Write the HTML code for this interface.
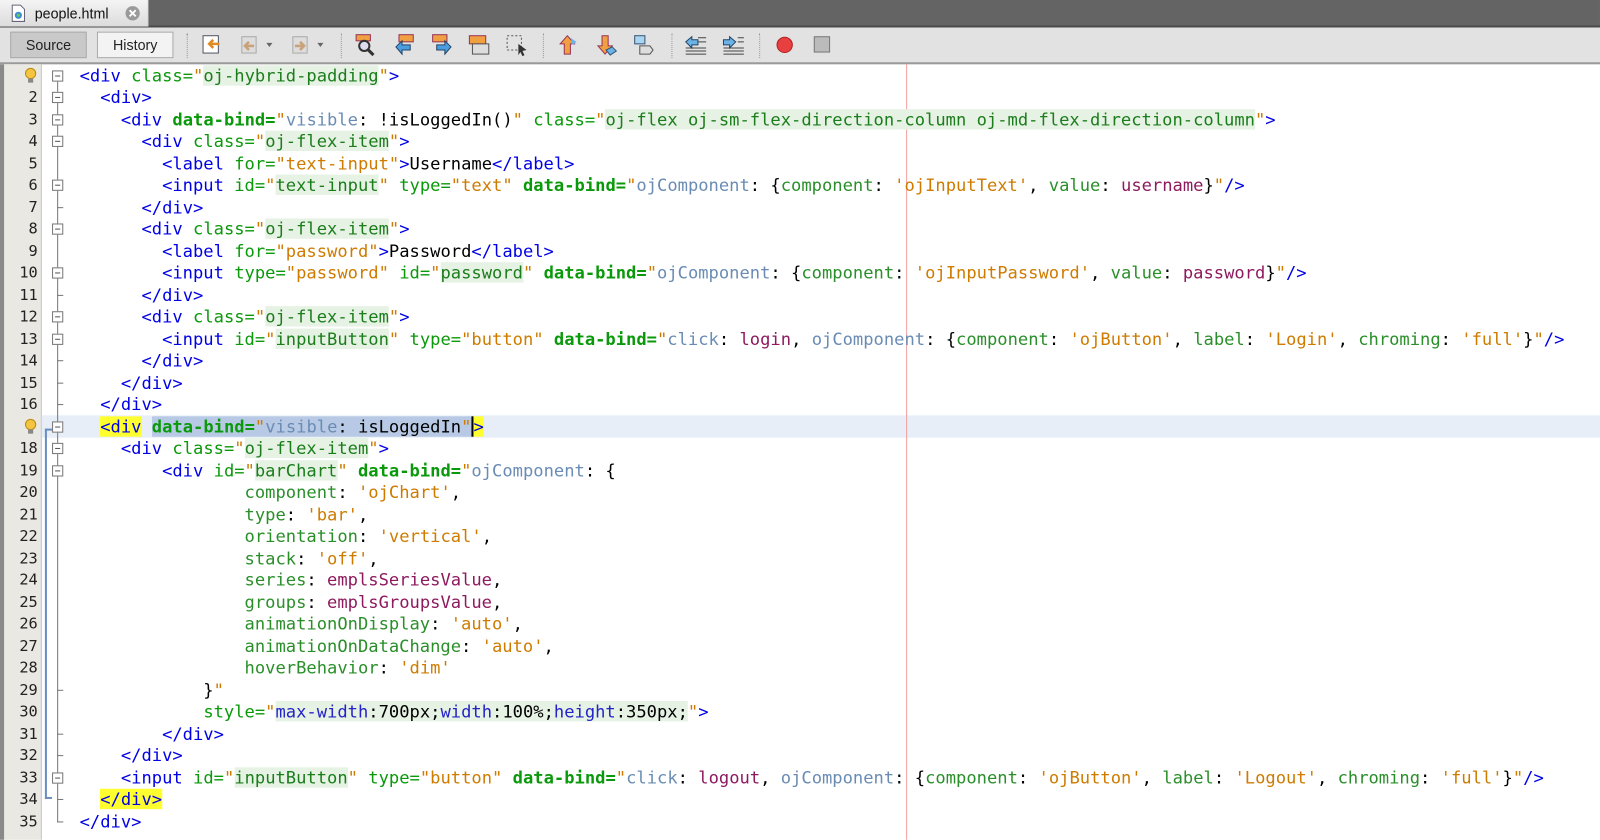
<!DOCTYPE html>
<html><head><meta charset="utf-8"><style>
*{margin:0;padding:0;box-sizing:border-box}
body{width:1600px;height:836px;overflow:hidden;background:#fff;position:relative;font-family:"Liberation Sans",sans-serif}
#wrap{position:absolute;left:0;top:0;width:1568px;height:820px;transform:scale(1.0204);transform-origin:0 0}
#tabbar{position:absolute;left:0;top:0;width:1568px;height:27px;background:#646464;border-bottom:2px solid #4a4a4a}
#tab{position:absolute;left:0;top:0;width:146px;height:26px;background:linear-gradient(#f4f4f4,#dcdcdc);border-right:1px solid #999}
#tab span{position:absolute;left:34px;top:5px;font-size:14px;color:#111}
#toolbar{position:absolute;left:0;top:27px;width:1568px;height:36px;background:#e2e2e2;border-bottom:2px solid #9a9a9a}
.btn{position:absolute;top:4px;height:26px;border:1px solid #aaa;font-size:14px;text-align:center;line-height:24px;color:#222}
.sep{position:absolute;top:6px;height:24px;border-left:1px dotted #999}
.ic{position:absolute;top:6px}
#gutter{position:absolute;left:0;top:63px;width:41px;height:760px;background:#e9e8e2;border-left:4px solid #8a8a8a;border-right:1px solid #c8c8c8}
.ln{position:absolute;left:0;width:37px;text-align:right;font-family:"DejaVu Sans Mono",monospace;font-size:15px;color:#222;line-height:21.5px}
.code{position:absolute;left:78px;font-family:"DejaVu Sans Mono",monospace;font-size:16.8px;line-height:21.5px;white-space:pre;color:#000}
.fb{position:absolute;left:51px;width:11px;height:11px;border:1px solid #777;background:#fff}
.fb:after{content:"";position:absolute;left:2px;top:4px;width:5px;height:1px;background:#555}
.tk{position:absolute;left:56px;width:6px;height:1px;background:#777}
.t{color:#0000e6}.a{color:#0a990a}.b{color:#0a990a;font-weight:bold}.q{color:#ce7b00}
.v{color:#1b7d1b;background:#e6f2e4}.j{color:#6a8cb4}.k{color:#2a8f2a}.p{color:#8e1a5e}.c{color:#2323c8}
.y{background:#ffff30}.s{background:#b7c9e4}
</style></head><body><div id="wrap">
<div id="tabbar"><div id="tab">
<svg style="position:absolute;left:10px;top:4px" width="16" height="18"><path d="M2 1h8l4 4v12H2z" fill="#fff" stroke="#667"/><circle cx="8" cy="11" r="3.5" fill="#3a8fd0"/><circle cx="8" cy="11" r="1.5" fill="#7c4"/></svg>
<span>people.html</span>
<svg style="position:absolute;left:122px;top:5px" width="16" height="16"><circle cx="8" cy="8" r="7" fill="#9a9a9a"/><path d="M5 5l6 6M11 5l-6 6" stroke="#fff" stroke-width="1.8"/></svg>
</div></div>
<div id="toolbar">
<div class="btn" style="left:10px;width:75px;background:#c9c9c9">Source</div>
<div class="btn" style="left:95px;width:75px;background:#f3f3f3">History</div>
<div class="sep" style="left:183px"></div>
<svg class="ic" style="left:197px" width="22" height="22"><rect x="2" y="2" width="15" height="17" fill="#fff" stroke="#556"/><path d="M8 10h10M12 6l-4 4 4 4" stroke="#e08a20" stroke-width="2.5" fill="none"/></svg>
<svg class="ic" style="left:235px" width="34" height="22"><rect x="2" y="3" width="14" height="16" fill="#ddd" stroke="#aaa"/><path d="M6 12h8M9 8l-4 4 4 4" stroke="#c9a27a" stroke-width="2.5" fill="none"/><path d="M26 9h6l-3 4z" fill="#666"/></svg>
<svg class="ic" style="left:285px" width="34" height="22"><rect x="2" y="3" width="14" height="16" fill="#ddd" stroke="#aaa"/><path d="M4 12h8M9 8l4 4-4 4" stroke="#c9a27a" stroke-width="2.5" fill="none"/><path d="M26 9h6l-3 4z" fill="#666"/></svg>
<div class="sep" style="left:334px"></div>
<svg class="ic" style="left:347px" width="24" height="24"><rect x="2" y="1" width="14" height="6" fill="#f0a040" stroke="#935"/><circle cx="10" cy="12" r="5" fill="#dde" stroke="#333" stroke-width="2"/><path d="M14 16l5 5" stroke="#333" stroke-width="3"/></svg>
<svg class="ic" style="left:385px" width="24" height="24"><rect x="6" y="1" width="14" height="7" fill="#f0a040" stroke="#935"/><path d="M3 13l6-6v4h8v5H9v4z" fill="#4a9ee0" stroke="#246"/></svg>
<svg class="ic" style="left:421px" width="24" height="24"><rect x="3" y="1" width="14" height="7" fill="#f0a040" stroke="#935"/><path d="M21 13l-6-6v4H7v5h8v4z" fill="#4a9ee0" stroke="#246"/></svg>
<svg class="ic" style="left:458px" width="24" height="24"><rect x="2" y="2" width="16" height="8" fill="#f0a040" stroke="#935"/><rect x="5" y="10" width="16" height="10" fill="#ddd" stroke="#555"/></svg>
<svg class="ic" style="left:495px" width="24" height="24"><rect x="2" y="2" width="14" height="14" fill="none" stroke="#555" stroke-dasharray="2 2"/><path d="M13 10l8 6-4 1 2 4-2 1-2-4-2 3z" fill="#333"/></svg>
<div class="sep" style="left:532px"></div>
<svg class="ic" style="left:545px" width="24" height="24"><path d="M11 2l7 8h-4v10H8V10H4z" fill="#f0a040" stroke="#935"/><path d="M14 4l6 4-4 3z" fill="#6bb3e6"/></svg>
<svg class="ic" style="left:582px" width="24" height="24"><path d="M11 20l7-8h-4V2H8v10H4z" fill="#f0a040" stroke="#935"/><path d="M12 16l6-3 4 4-6 4z" fill="#6bb3e6" stroke="#357"/></svg>
<svg class="ic" style="left:619px" width="24" height="24"><rect x="3" y="2" width="10" height="8" fill="#aad4f0" stroke="#357"/><path d="M8 12h10l3 4-3 4H8z" fill="#ddd" stroke="#555"/></svg>
<div class="sep" style="left:658px"></div>
<svg class="ic" style="left:670px" width="24" height="24"><path d="M2 8l6-5v3h6v5H8v3z" fill="#6bb3e6" stroke="#246"/><path d="M14 4h8M14 8h8M2 14h20M2 17h20M2 20h20" stroke="#444"/></svg>
<svg class="ic" style="left:707px" width="24" height="24"><path d="M14 8l-6-5v3H2v5h6v3z" fill="#6bb3e6" stroke="#246"/><path d="M16 4h6M16 8h6M2 14h20M2 17h20M2 20h20" stroke="#444"/></svg>
<div class="sep" style="left:744px"></div>
<svg class="ic" style="left:758px" width="22" height="22"><circle cx="11" cy="11" r="7.5" fill="#e84040" stroke="#b02020"/></svg>
<svg class="ic" style="left:795px" width="22" height="22"><rect x="3" y="3" width="15" height="15" fill="#bbb" stroke="#777"/></svg>
</div>
<div id="gutter"></div>
<div style="position:absolute;left:41px;top:407px;width:1527px;height:22px;background:#e8eef8"></div>
<div style="position:absolute;left:888px;top:63px;width:1px;height:760px;background:#f4a0a0"></div>
<div style="position:absolute;left:56px;top:74px;width:1px;height:732px;background:#777"></div>
<div style="position:absolute;left:44px;top:420px;width:2px;height:363px;background:#6a8fc0"></div>
<div style="position:absolute;left:44px;top:420px;width:7px;height:2px;background:#6a8fc0"></div>
<div style="position:absolute;left:44px;top:781px;width:7px;height:2px;background:#6a8fc0"></div>
<div id="nums"></div>
<svg style="position:absolute;left:23px;top:66px" width="14" height="18"><circle cx="7" cy="6" r="5" fill="#f5c542" stroke="#b88a10"/><rect x="4.5" y="11" width="5" height="4" fill="#888"/></svg>
<svg style="position:absolute;left:23px;top:410px" width="14" height="18"><circle cx="7" cy="6" r="5" fill="#f5c542" stroke="#b88a10"/><rect x="4.5" y="11" width="5" height="4" fill="#888"/></svg>
</div>
<script>
(function(){
var L=[
'<span class=t>&lt;div</span> <span class=a>class=</span><span class=q>"</span><span class=v>oj-hybrid-padding</span><span class=q>"</span><span class=t>&gt;</span>',
'  <span class=t>&lt;div&gt;</span>',
'    <span class=t>&lt;div</span> <span class=b>data-bind=</span><span class=q>"</span><span class=j>visible</span>: !isLoggedIn()<span class=q>"</span> <span class=a>class=</span><span class=q>"</span><span class=v>oj-flex oj-sm-flex-direction-column oj-md-flex-direction-column</span><span class=q>"</span><span class=t>&gt;</span>',
'      <span class=t>&lt;div</span> <span class=a>class=</span><span class=q>"</span><span class=v>oj-flex-item</span><span class=q>"</span><span class=t>&gt;</span>',
'        <span class=t>&lt;label</span> <span class=a>for=</span><span class=q>"text-input"</span><span class=t>&gt;</span>Username<span class=t>&lt;/label&gt;</span>',
'        <span class=t>&lt;input</span> <span class=a>id=</span><span class=q>"</span><span class=v>text-input</span><span class=q>"</span> <span class=a>type=</span><span class=q>"text"</span> <span class=b>data-bind=</span><span class=q>"</span><span class=j>ojComponent</span>: {<span class=k>component</span>: <span class=q>\'ojInputText\'</span>, <span class=k>value</span>: <span class=p>username</span>}<span class=q>"</span><span class=t>/&gt;</span>',
'      <span class=t>&lt;/div&gt;</span>',
'      <span class=t>&lt;div</span> <span class=a>class=</span><span class=q>"</span><span class=v>oj-flex-item</span><span class=q>"</span><span class=t>&gt;</span>',
'        <span class=t>&lt;label</span> <span class=a>for=</span><span class=q>"password"</span><span class=t>&gt;</span>Password<span class=t>&lt;/label&gt;</span>',
'        <span class=t>&lt;input</span> <span class=a>type=</span><span class=q>"password"</span> <span class=a>id=</span><span class=q>"</span><span class=v>password</span><span class=q>"</span> <span class=b>data-bind=</span><span class=q>"</span><span class=j>ojComponent</span>: {<span class=k>component</span>: <span class=q>\'ojInputPassword\'</span>, <span class=k>value</span>: <span class=p>password</span>}<span class=q>"</span><span class=t>/&gt;</span>',
'      <span class=t>&lt;/div&gt;</span>',
'      <span class=t>&lt;div</span> <span class=a>class=</span><span class=q>"</span><span class=v>oj-flex-item</span><span class=q>"</span><span class=t>&gt;</span>',
'        <span class=t>&lt;input</span> <span class=a>id=</span><span class=q>"</span><span class=v>inputButton</span><span class=q>"</span> <span class=a>type=</span><span class=q>"button"</span> <span class=b>data-bind=</span><span class=q>"</span><span class=j>click</span>: <span class=p>login</span>, <span class=j>ojComponent</span>: {<span class=k>component</span>: <span class=q>\'ojButton\'</span>, <span class=k>label</span>: <span class=q>\'Login\'</span>, <span class=k>chroming</span>: <span class=q>\'full\'</span>}<span class=q>"</span><span class=t>/&gt;</span>',
'      <span class=t>&lt;/div&gt;</span>',
'    <span class=t>&lt;/div&gt;</span>',
'  <span class=t>&lt;/div&gt;</span>',
'  <span class="t y">&lt;div</span> <span class=s><span class=b>data-bind=</span><span class=q>"</span><span class=j>visible</span>: isLoggedIn<span class=q>"</span></span><span class="t y" style="border-left:2px solid #000">&gt;</span>',
'    <span class=t>&lt;div</span> <span class=a>class=</span><span class=q>"</span><span class=v>oj-flex-item</span><span class=q>"</span><span class=t>&gt;</span>',
'        <span class=t>&lt;div</span> <span class=a>id=</span><span class=q>"</span><span class=v>barChart</span><span class=q>"</span> <span class=b>data-bind=</span><span class=q>"</span><span class=j>ojComponent</span>: {',
'                <span class=k>component</span>: <span class=q>\'ojChart\'</span>,',
'                <span class=k>type</span>: <span class=q>\'bar\'</span>,',
'                <span class=k>orientation</span>: <span class=q>\'vertical\'</span>,',
'                <span class=k>stack</span>: <span class=q>\'off\'</span>,',
'                <span class=k>series</span>: <span class=p>emplsSeriesValue</span>,',
'                <span class=k>groups</span>: <span class=p>emplsGroupsValue</span>,',
'                <span class=k>animationOnDisplay</span>: <span class=q>\'auto\'</span>,',
'                <span class=k>animationOnDataChange</span>: <span class=q>\'auto\'</span>,',
'                <span class=k>hoverBehavior</span>: <span class=q>\'dim\'</span>',
'            }<span class=q>"</span>',
'            <span class=a>style=</span><span class=q>"</span><span class=v style="color:#000"><span class=c>max-width</span>:700px;<span class=c>width</span>:100%;<span class=c>height</span>:350px;</span><span class=q>"</span><span class=t>&gt;</span>',
'        <span class=t>&lt;/div&gt;</span>',
'    <span class=t>&lt;/div&gt;</span>',
'    <span class=t>&lt;input</span> <span class=a>id=</span><span class=q>"</span><span class=v>inputButton</span><span class=q>"</span> <span class=a>type=</span><span class=q>"button"</span> <span class=b>data-bind=</span><span class=q>"</span><span class=j>click</span>: <span class=p>logout</span>, <span class=j>ojComponent</span>: {<span class=k>component</span>: <span class=q>\'ojButton\'</span>, <span class=k>label</span>: <span class=q>\'Logout\'</span>, <span class=k>chroming</span>: <span class=q>\'full\'</span>}<span class=q>"</span><span class=t>/&gt;</span>',
'  <span class="t y">&lt;/div&gt;</span>',
'<span class=t>&lt;/div&gt;</span>'];
var boxes=[1,2,3,4,6,8,10,12,13,17,18,19,33];
var h='';
for(var i=0;i<L.length;i++){var n=i+1,yy=63.5+i*21.5;
if(n!=1&&n!=17)h+='<div class=ln style="top:'+yy+'px">'+n+'</div>';
h+='<div class=code style="top:'+yy+'px">'+L[i]+'</div>';
if(boxes.indexOf(n)>=0)h+='<div class=fb style="top:'+(yy+5)+'px"></div>';
else if([7,11,14,15,16,29,31,32,34,35].indexOf(n)>=0)h+='<div class=tk style="top:'+(yy+10)+'px"></div>';}
document.getElementById('nums').innerHTML=h;
})();
</script>
</body></html>
